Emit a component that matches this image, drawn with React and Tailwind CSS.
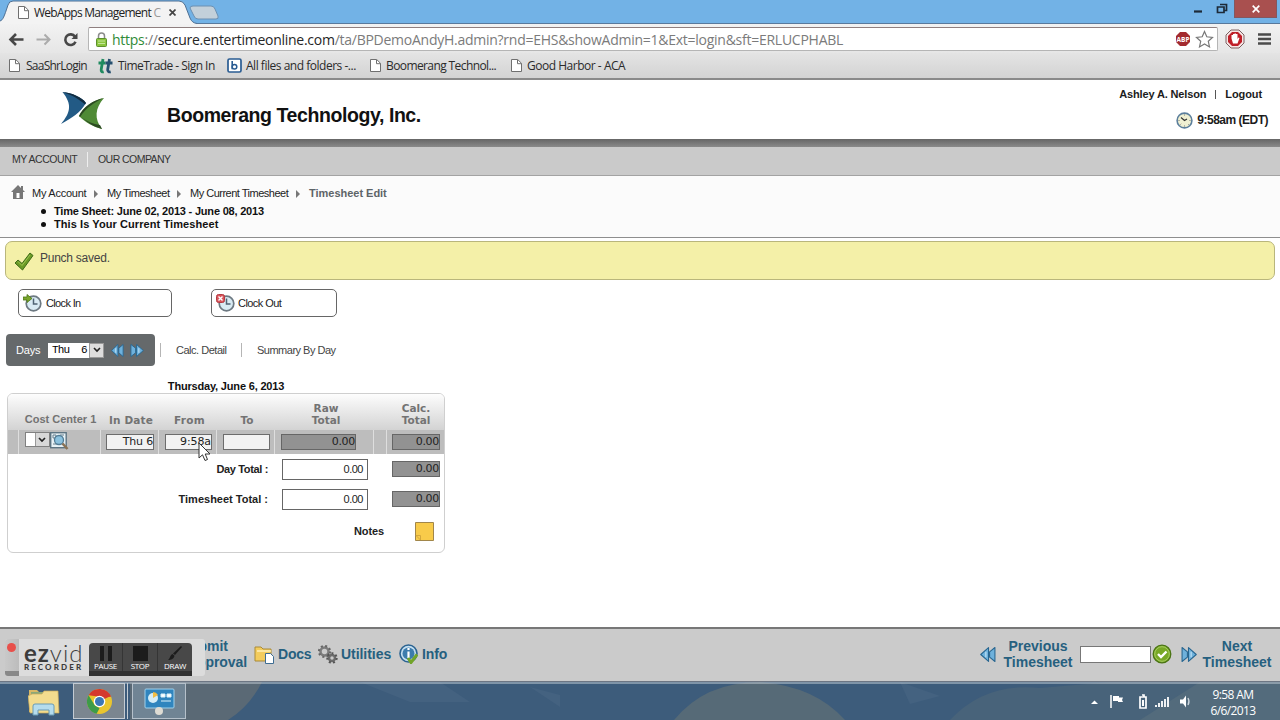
const bookmarks = [
  { label: 'SaaShrLogin', icon: 'page', className: 'w-[89px] gap-[6px] tracking-[-0.75px]' },
  { label: 'TimeTrade - Sign In', icon: 'tt', className: 'w-[129px] gap-[5px] tracking-[-0.55px]' },
  { label: 'All files and folders -...', icon: 'b', className: 'w-[143px] gap-[4px] tracking-[-0.48px]' },
  { label: 'Boomerang Technol...', icon: 'page', className: 'w-[141px] gap-[5px] tracking-[-0.6px]' },
  { label: 'Good Harbor - ACA', icon: 'page', className: 'w-[130px] gap-[5px] tracking-[-0.48px]' },
];

const crumbs = [
  { label: 'My Account', className: 'w-[75px] tracking-[-0.25px]' },
  { label: 'My Timesheet', className: 'w-[83px] tracking-[-0.5px]' },
  { label: 'My Current Timesheet', className: 'w-[119px] tracking-[-0.5px]' },
];

function PageIcon() {
  return (
    <svg className="h-[13px] w-[11px] shrink-0" viewBox="0 0 11 13">
      <path d="M.5.5h6.200l3.800 3.800v8.200H.5z" fill="#fff" stroke="#6f6f6f" />
      <path d="M6.500.8v3.900h3.800" fill="none" stroke="#6f6f6f" />
    </svg>
  );
}

function BookmarkIcon({ type }) {
  if (type === 'tt') {
    return (
      <svg className="h-4 w-[15px] shrink-0" viewBox="0 0 15 16">
        <path d="M5 1 3.200 11.500c-.3 2 1 2.700 2.500 2.300M.5 5h7" fill="none" stroke="#1f8a5f" strokeWidth="2.800" />
        <path d="M11.500 1 9.700 11.500c-.3 2 1.300 2.700 3 2.300M7.500 5h7" fill="none" stroke="#27506f" strokeWidth="2.800" />
      </svg>
    );
  }
  if (type === 'b') {
    return (
      <svg className="h-[15px] w-[15px] shrink-0" viewBox="0 0 15 15">
        <rect x="1" y="1" width="13" height="13" rx="1.500" fill="#fff" stroke="#2a5c92" strokeWidth="1.700" />
        <path d="M5.200 3v8.200" stroke="#2a5c92" strokeWidth="1.600" />
        <circle cx="7.500" cy="8.800" r="2.300" fill="none" stroke="#2a5c92" strokeWidth="1.500" />
      </svg>
    );
  }
  return <PageIcon />;
}

function TitleBar() {
  return (
    <div className="flex h-[24px] justify-between border-b border-[#58799c] bg-[#72b2e6]">
      <div className="relative h-[24px] w-[220px]">
        <svg className="absolute inset-0 h-[24px] w-[220px]" viewBox="0 0 220 24">
          <path d="M0 24V21C3 20 4 17 8 5Q9 1 13 1H179Q183 1 185 5L190 18Q192 23 197 23.500V24Z" fill="#f3f3f3" />
          <path d="M0 21C3 20 4 17 8 5Q9 1 13 1H179Q183 1 185 5L190 18Q192 23 197 23.500" fill="none" stroke="#4d6f93" />
          <path d="M193 6H211Q214 6 215 9L218 16Q219 19 216 19H198Q195 19 194 16L190 8Q190 6 193 6Z" fill="#c3d0da" stroke="#6c90b2" />
        </svg>
        <div className="relative flex h-[25px] items-center pl-[18px]">
          <PageIcon />
          <span className="ml-[5px] w-[128px] whitespace-nowrap text-[12px] tracking-[-0.75px] text-[#222]">
            WebApps Management <span className="text-[#999]">C</span>
          </span>
          <svg className="ml-[7px] h-[7px] w-[7px]" viewBox="0 0 7 7">
            <path d="m.5.5 6 6m0-6-6 6" stroke="#444" strokeWidth="1.700" />
          </svg>
        </div>
      </div>
      <div className="flex">
        <svg className="h-[22px] w-[41px]" viewBox="0 0 41 22">
          <path d="M1 11.500h8" stroke="#1d2a38" strokeWidth="2.200" />
          <path d="M27 4.500h6.500v6h-2M24.500 7h6.500v5.500h-6.500z" fill="none" stroke="#1d2a38" strokeWidth="1.700" />
        </svg>
        <div className="flex h-[18px] w-[43px] items-center justify-center border border-t-0 border-[#84575f] bg-[#a9504f]">
          <svg className="h-[8px] w-[8px]" viewBox="0 0 8 8">
            <path d="m.7.700 6.600 6.600m0-6.600L.7 7.300" stroke="#fff" strokeWidth="1.700" />
          </svg>
        </div>
        <div className="w-[3px]" />
      </div>
    </div>
  );
}

function AddressBar() {
  return (
    <div className="flex h-[29px] items-center bg-linear-to-b from-[#f2f2f2] to-[#e6e6e6] pl-[8px]">
      <svg className="h-[16px] w-[72px] shrink-0" viewBox="0 0 72 16">
        <path d="M15.500 8.500H3M8 3 2.500 8.500 8 14" fill="none" stroke="#474747" strokeWidth="2.600" />
        <path d="M28.500 8.500H41M36.500 3.500l5 5-5 5" fill="none" stroke="#ababab" strokeWidth="2" />
        <path d="M67.500 10.700a5.300 5.300 0 1 1-.5-5" fill="none" stroke="#474747" strokeWidth="2.600" />
        <path d="M69.500 2v6h-6z" fill="#474747" />
      </svg>
      <div className="ml-[8px] flex h-[24px] w-[1130px] items-center rounded-[2px] border border-[#b5b5b5] border-t-[#8f7f7f] bg-white pt-px pl-[7px]">
        <svg className="h-[15px] w-[11px] shrink-0" viewBox="0 0 11 15">
          <path d="M2.500 7V4a3 3 0 0 1 6 0v3" fill="none" stroke="#8b8b8b" strokeWidth="1.500" />
          <rect x=".5" y="6.500" width="10" height="8" rx="1" fill="#8cc63f" stroke="#5c8f2c" />
          <path d="M2 9h7M2 11.500h7" stroke="#c4e59a" />
        </svg>
        <span className="ml-[5px] w-[1060px] whitespace-nowrap text-[14px] tracking-[-0.26px] text-[#7b7b7b]">
          <span className="text-[#2f8b37]">https</span>://<span className="text-[#262626]">secure.entertimeonline.com</span>
          /ta/BPDemoAndyH.admin?rnd=EHS&amp;showAdmin=1&amp;Ext=login&amp;sft=ERLUCPHABL
        </span>
        <svg className="ml-[3px] h-[18px] w-[40px] shrink-0" viewBox="0 0 40 18">
          <path d="M5 2h6l4 4v6l-4 4H5l-4-4V6z" fill="#a32b2f" />
          <text x="8" y="11.500" textAnchor="middle" fontSize="6.500" fontWeight="bold" fill="#fff">ABP</text>
          <path d="m29.500 1.500 2.300 5.300 5.700.6-4.200 3.900 1.200 5.600-5-2.900-5 2.900 1.200-5.600-4.200-3.900 5.700-.6z" fill="#fff" stroke="#777" strokeWidth="1.200" />
        </svg>
      </div>
      <svg className="ml-[7px] h-[20px] w-[20px] shrink-0" viewBox="0 0 20 20">
        <path d="M6 1h8l5 5v8l-5 5H6l-5-5V6z" fill="#f6e4e4" stroke="#7c6262" />
        <path d="M7 3h6l4 4v6l-4 4H7l-4-4V7z" fill="#bf1f28" />
        <path d="M6.500 9.500V6h1.500V5h1.500v-.5H11V5h1.500v5l1-1.500 1 .5-2 5.500H8z" fill="#fff" />
      </svg>
      <svg className="ml-[13px] h-[13px] w-[13px] shrink-0" viewBox="0 0 13 13">
        <path d="M0 2.500h13M0 7h13M0 11.500h13" stroke="#4b4b4b" strokeWidth="2.600" />
      </svg>
    </div>
  );
}

function BookmarksBar() {
  return (
    <div className="flex h-[27px] items-center border-b-2 border-[#8a8a8a] bg-linear-to-b from-[#e4e4e4] to-[#d3d3d3] pl-[9px]">
      {bookmarks.map((item) => (
        <div key={item.label} className={'flex shrink-0 items-center whitespace-nowrap text-[12px] text-[#2b2b2b] ' + item.className}>
          <BookmarkIcon type={item.icon} />
          <span>{item.label}</span>
        </div>
      ))}
    </div>
  );
}

function Header() {
  return (
    <div className="flex h-[59px] justify-between bg-white">
      <div className="flex items-start">
        <svg className="mt-[11px] ml-[60px] h-[39px] w-[45px]" viewBox="0 0 45 39">
          <path d="M2.500 1C12 2 22 6 26 12 20 22 12 27 1 33 11 21 12 13 2.500 1Z" fill="#225a85" />
          <path d="M2.500 1C12 2 22 6 26 12l-1 1.500C19 8 12 4 2.500 1Z" fill="#122c40" />
          <path d="M44 7C33 9 23 16 19 25c6 6 14 11 23 13C34 28 35 17 44 7Z" fill="#4f8a35" />
          <path d="M44 7C33 9 23 16 19 25l1 1C26 17 34 11 44 7ZM21 26c6 5 13 10 21 12l-2-4C33 33 26 30 21 26Z" fill="#2c4a22" />
        </svg>
        <h1 className="mt-[22px] ml-[62px] whitespace-nowrap text-[19.500px] leading-[26px] font-bold tracking-[-0.42px] text-[#111]">
          Boomerang Technology, Inc.
        </h1>
      </div>
      <div className="flex flex-col items-end pr-[12px] text-[#1c1c1c]">
        <div className="mt-[7px] flex h-[14px] items-center pr-[6px] text-[11px] leading-[14px] font-bold">
          <span className="tracking-[-0.15px]">Ashley A. Nelson</span>
          <span className="mx-[9px] h-[9px] w-px bg-[#555]" />
          <span className="tracking-[-0.1px]">Logout</span>
        </div>
        <div className="mt-[11px] flex items-center gap-[4px] text-[12px] leading-[17px] font-bold tracking-[-0.5px]">
          <svg className="h-[17px] w-[17px]" viewBox="0 0 17 17">
            <circle cx="8.500" cy="8.500" r="7.400" fill="#f0f0d2" stroke="#5c7f9c" strokeWidth="1.600" />
            <path d="M5 5.500 8.500 8.500l2.500-1.500" fill="none" stroke="#333" strokeWidth="1.200" />
            <path d="M8.500 2.500v1M8.500 13.500v1M2.500 8.500h1M13.500 8.500h1M4.500 12.500l.7-.7M12 12l.6.600" stroke="#777" />
          </svg>
          9:58am (EDT)
        </div>
      </div>
    </div>
  );
}

function NavBar() {
  return (
    <>
      <div className="h-[8px] bg-linear-to-b from-[#666] to-[#8a8a8a]" />
      <div className="flex h-[29px] items-center border-b border-[#a3a3a3] bg-[#cacaca] pb-[3px] pl-[12px] text-[10.500px] text-[#333]">
        <span className="w-[75px] whitespace-nowrap tracking-[-0.45px]">MY ACCOUNT</span>
        <span className="h-[15px] w-px bg-[#eee]" />
        <span className="ml-[10px] whitespace-nowrap tracking-[-0.55px]">OUR COMPANY</span>
      </div>
    </>
  );
}

function Breadcrumbs() {
  return (
    <div className="h-[62px] border-b border-[#8e8e8e] bg-[#fbfbfb] pt-[8px]">
      <div className="flex h-[19px] items-center pl-[11px] text-[11px] text-[#222]">
        <svg className="mr-[7px] h-[14px] w-[14px] -translate-y-[2px]" viewBox="0 0 14 14">
          <path d="M7 0 0 7h2v7h10V7h2l-2-2V1h-2v2z" fill="#777" />
          <path d="M5.500 8h3v5h-3z" fill="#fff" />
        </svg>
        {crumbs.map((crumb) => (
          <div key={crumb.label} className={'flex shrink-0 items-center justify-between pr-[9px] whitespace-nowrap ' + crumb.className}>
            <span>{crumb.label}</span>
            <svg className="h-[8px] w-[4px] shrink-0" viewBox="0 0 4 8">
              <path d="M0 0 4 4 0 8z" fill="#777" />
            </svg>
          </div>
        ))}
        <span className="font-bold tracking-[-0.02px] text-[#5d6468]">Timesheet Edit</span>
      </div>
      <ul className="pt-[2px] pl-[41px] text-[11px] leading-[13px] font-bold text-[#111]">
        <li className="flex items-center gap-[8px] whitespace-nowrap">
          <span className="h-[5px] w-[5px] rounded-full bg-[#111]" />
          <span className="tracking-[-0.2px]">Time Sheet: June 02, 2013 - June 08, 2013</span>
        </li>
        <li className="flex items-center gap-[8px] whitespace-nowrap">
          <span className="h-[5px] w-[5px] rounded-full bg-[#111]" />
          <span className="tracking-[0.08px]">This Is Your Current Timesheet</span>
        </li>
      </ul>
    </div>
  );
}

function ClockIcon({ out }) {
  return (
    <svg className="h-[18px] w-[19px] shrink-0" viewBox="0 0 19 18">
      <circle cx="10.500" cy="9.500" r="7.300" fill="#d9ebf3" stroke="#6d7982" strokeWidth="1.700" />
      <path d="M10.500 4.500v5.500h4" fill="none" stroke="#4f6373" strokeWidth="1.500" />
      {out ? (
        <>
          <rect x=".5" y=".5" width="8" height="8" rx="2" fill="#d9545b" stroke="#b33b42" />
          <path d="m2.500 2.500 4 4m0-4-4 4" stroke="#fff" strokeWidth="1.400" />
        </>
      ) : (
        <path d="M0 3h4V.5L9 4.500 4 8.500V6H0z" fill="#7aa62c" stroke="#4d7519" strokeWidth=".8" />
      )}
    </svg>
  );
}

function SkipIcon({ back, className }) {
  return (
    <svg className={className} viewBox="0 0 15 14" preserveAspectRatio="none">
      <g transform={back ? 'matrix(-1 0 0 1 15 0)' : undefined} fill="#6eb1dc" stroke="#286690" strokeLinejoin="round">
        <path d="M1 .5v13l5-4v-5z" />
        <path d="M7 .5 14.300 7 7 13.500z" />
        <path d="M9.500 4.500v5" stroke="#c9e6f7" />
      </g>
    </svg>
  );
}

function DayToolbar() {
  return (
    <div className="mt-[17px] flex h-[32px] items-center pl-[6px] text-[11px]">
      <div className="flex h-[32px] w-[149px] shrink-0 items-center rounded-[4px] bg-[#65696b] pl-[10px]">
        <span className="w-[32px] tracking-[-0.2px] text-white">Days</span>
        <div className="flex h-[15px] w-[56px] shrink-0 items-center bg-white">
          <span className="w-[41px] shrink-0 pl-[4px] font-['Liberation_Mono',monospace] text-[11px] leading-[15px] tracking-[-0.8px] whitespace-pre text-black">Thu  6</span>
          <span className="flex h-[15px] w-[15px] shrink-0 items-center justify-center border border-[#999] bg-[#ddd]">
            <svg className="h-[6px] w-[8px]" viewBox="0 0 8 6">
              <path d="m1 1 3 3 3-3" fill="none" stroke="#222" strokeWidth="1.600" />
            </svg>
          </span>
        </div>
        <SkipIcon back className="ml-[7px] h-[13px] w-[13px] shrink-0" />
        <SkipIcon className="ml-[6px] h-[13px] w-[14px] shrink-0" />
      </div>
      <span className="ml-[5px] h-[14px] w-px bg-[#b5b5b5]" />
      <span className="ml-[15px] w-[65px] whitespace-nowrap tracking-[-0.48px] text-[#444]">Calc. Detail</span>
      <span className="h-[14px] w-px bg-[#b5b5b5]" />
      <span className="ml-[15px] whitespace-nowrap tracking-[-0.5px] text-[#444]">Summary By Day</span>
    </div>
  );
}

function Field({ className, children }) {
  return (
    <div className={'flex items-center justify-end border text-[11px] whitespace-nowrap text-[#222] ' + className}>
      {children}
    </div>
  );
}

const cols = 'grid grid-cols-[11px_82px_58px_58px_58px_99px_13px_57px]';

function TotalRow({ label, className }) {
  return (
    <div className={'flex items-start ' + className}>
      <span className="w-[260px] text-right text-[11px] leading-[21px] font-bold whitespace-nowrap text-[#222]">{label}</span>
      <Field className="ml-[14px] h-[21px] w-[86px] border-[#666] bg-white pr-[4px] tracking-[-0.5px]">0.00</Field>
      <Field className="mt-[2px] ml-[24px] h-[16px] w-[48px] border-[#666] bg-[#929292] font-['DejaVu_Sans'] tracking-[-0.3px]">0.00</Field>
    </div>
  );
}

function TimesheetTable() {
  return (
    <div className="ml-[7px] h-[160px] w-[438px] overflow-hidden rounded-[6px] border border-[#cfcfcf] bg-white">
      <div className={cols + " h-[36px] items-end bg-linear-to-b from-[#fdfdfd] to-[#d3d3d3] pb-[4px] text-center font-['DejaVu_Sans'] text-[10.500px] leading-[12px] font-bold text-[#737373]"}>
        <span />
        <span className="pb-px pl-px font-['Liberation_Sans'] text-[11px] whitespace-nowrap">Cost Center 1</span>
        <span className="pl-[2px] whitespace-nowrap tracking-[0.15px]">In Date</span>
        <span className="pl-[3px] tracking-[0.3px]">From</span>
        <span className="pl-[2px]">To</span>
        <span className="pl-[3px]">Raw<br />Total</span>
        <span />
        <span className="pl-px">Calc.<br />Total</span>
      </div>
      <div className={cols + ' h-[24px] bg-[#bdbdbd]'}>
        <div className="border-r border-[#dedede]" />
        <div className="flex border-r border-[#dedede] pt-[2px] pl-[6px]">
          <div className="flex h-[15px] w-[25px] border border-[#808080] bg-white">
            <div className="w-[9px]" />
            <div className="flex w-[15px] items-center justify-center border-l border-[#999] bg-[#d8d8d8]">
              <svg className="h-[6px] w-[8px]" viewBox="0 0 8 6">
                <path d="m1 1 3 3 3-3" fill="none" stroke="#222" strokeWidth="1.700" />
              </svg>
            </div>
          </div>
          <svg className="h-[18px] w-[20px]" viewBox="0 0 20 18">
            <rect x=".7" y=".7" width="15.500" height="15" fill="#e8f2f6" stroke="#5d7482" strokeWidth="1.400" />
            <path d="M3 3h3v3H3zM10 3h4M3 12h4" stroke="#667e8c" fill="none" />
            <circle cx="9" cy="8" r="4.500" fill="#8bc2df" stroke="#517c96" strokeWidth="1.300" />
            <path d="m12.500 11.500 5 5.500" stroke="#8b7355" strokeWidth="2.600" />
          </svg>
        </div>
        <div className="border-r border-[#dedede] pt-[4px] pl-[5px]">
          <Field className="h-[16px] w-[48px] border-[#6c6c6c] bg-[#f2f2f2] pt-px font-['DejaVu_Sans'] tracking-[-0.2px]">Thu 6</Field>
        </div>
        <div className="border-r border-[#dedede] pt-[4px] pl-[6px]">
          <Field className="h-[16px] w-[47px] border-[#6c6c6c] bg-[#f2f2f2] pt-px font-['DejaVu_Sans'] tracking-[-0.1px]">9:58a</Field>
        </div>
        <div className="border-r border-[#dedede] pt-[4px] pl-[6px]">
          <Field className="h-[16px] w-[47px] border-[#6c6c6c] bg-[#f2f2f2]" />
        </div>
        <div className="border-r border-[#dedede] pt-[4px] pl-[6px]">
          <Field className="h-[16px] w-[75px] border-[#666] bg-[#929292] pt-px font-['DejaVu_Sans'] tracking-[-0.3px]">0.00</Field>
        </div>
        <div className="border-r border-[#dedede]" />
        <div className="pt-[4px] pl-[5px]">
          <Field className="h-[16px] w-[48px] border-[#666] bg-[#929292] pt-px font-['DejaVu_Sans'] tracking-[-0.3px]">0.00</Field>
        </div>
      </div>
      <TotalRow label="Day Total :" className="h-[30px] pt-[5px] tracking-[-0.35px]" />
      <TotalRow label="Timesheet Total :" className="h-[35px] pt-[5px]" />
      <div className="flex items-center pl-[346px] pt-[3px] text-[11px] font-bold text-[#222]">
        <span className="w-[61px] tracking-[-0.1px]">Notes</span>
        <svg className="h-[19px] w-[19px]" viewBox="0 0 19 19">
          <path d="M.5.500h18v18H.5z" fill="#f8cb4a" stroke="#a1864a" />
          <path d="M1 13.500h4.500V18M5.500 18 1 13.500" fill="none" stroke="#d3a73c" />
        </svg>
      </div>
    </div>
  );
}

function Recorder() {
  return (
    <div className="absolute top-[10px] left-[5px] flex h-[37px] w-[200px] items-end rounded-[3px] bg-[#dcdcdc] text-white">
      <div className="flex h-[37px] w-[14px] flex-col justify-between rounded-l-[3px] bg-linear-to-r from-[#c9c9c9] to-[#bcbcbc] pt-[4px]">
        <span className="ml-[2px] h-[9px] w-[9px] rounded-full bg-[#e8504b]" />
        <span className="h-[5px] rounded-bl-[3px] bg-[#888]" />
      </div>
      <div className="h-[37px] w-[70px] pt-[5px] pl-[5px] font-['Lato'] whitespace-nowrap text-[#3c3c3c]">
        <div className="h-[19px] text-[24px] leading-[17px] tracking-[1px]"><span className="font-bold">ez</span><span className="font-light">vid</span></div>
        <div className="text-[8px] leading-[9px] font-black tracking-[2.100px]">RECORDER</div>
      </div>
      <div className="flex h-[33px] w-[103px] rounded-t-[4px] border-b-[5px] border-[#303030] bg-[#484848] font-['Open_Sans'] text-[8px] leading-[9px] font-normal">
        <div className="flex w-[34px] flex-col items-center border-r border-[#353535] pt-[3px]">
          <svg className="h-[15px] w-[14px]" viewBox="0 0 14 15"><path d="M1 0h4v15H1zM9 0h4v15H9z" fill="#1c1c1c" /></svg>
          <span className="tracking-[-0.3px]">PAUSE</span>
        </div>
        <div className="flex w-[35px] flex-col items-center border-r border-[#353535] pt-[3px]">
          <svg className="h-[15px] w-[15px]" viewBox="0 0 15 15"><path d="M0 0h15v15H0z" fill="#1c1c1c" /></svg>
          <span className="tracking-[-0.3px]">STOP</span>
        </div>
        <div className="flex w-[34px] flex-col items-center pt-[3px]">
          <svg className="h-[15px] w-[14px]" viewBox="0 0 14 15"><path d="M13 0 14 1 7 9 5 7.500zM4.500 8l2 1.800C6 13 3 14 0 14c2-1 2-5 4.500-6z" fill="#1c1c1c" /></svg>
          <span className="tracking-[-0.3px]">DRAW</span>
        </div>
      </div>
    </div>
  );
}

function Footer() {
  return (
    <div className="relative flex h-[54px] items-center justify-between border-t-2 border-[#777] bg-[#cbcbcb] pb-[2px] text-[14px] leading-[16px] font-bold text-[#26607f]">
      <div className="flex items-center">
        <div className="w-[247px] pl-[178px]">
          <div className="w-[50px] text-right">Submit</div>
          <div className="w-[69px] text-right tracking-[-0.1px]">Approval</div>
        </div>
        <svg className="ml-[7px] h-[19px] w-[20px]" viewBox="0 0 20 19">
          <path d="M1 16V2h6l2 2h8v12z" fill="#f3cc5d" stroke="#a98a38" />
          <path d="M3 6h14" stroke="#fff0b8" strokeWidth="1.500" />
          <path d="M11.500 8.500h5l3 3v7h-8z" fill="#fff" stroke="#3f6d92" />
        </svg>
        <span className="ml-[4px] w-[40px] tracking-[-0.2px]">Docs</span>
        <svg className="h-[19px] w-[20px]" viewBox="0 0 20 19">
          <circle cx="6.500" cy="6.500" r="4" fill="none" stroke="#7c7c7c" strokeWidth="2.500" />
          <circle cx="6.500" cy="6.500" r="5.600" fill="none" stroke="#666" strokeWidth="2" strokeDasharray="2 2.400" />
          <circle cx="14" cy="13" r="3" fill="none" stroke="#6c6c6c" strokeWidth="2.500" />
          <circle cx="14" cy="13" r="4.700" fill="none" stroke="#555" strokeWidth="2" strokeDasharray="2 2.200" />
        </svg>
        <span className="ml-[3px] w-[58px] tracking-[-0.05px]">Utilities</span>
        <svg className="h-[20px] w-[20px]" viewBox="0 0 20 20">
          <circle cx="9.500" cy="9.500" r="8.500" fill="#c5dff0" stroke="#2b6391" strokeWidth="1.600" />
          <circle cx="9.500" cy="9.500" r="6" fill="#3d7cad" />
          <path d="M9.500 4v2M9.500 7.500V14" stroke="#fff" strokeWidth="2.200" />
          <path d="m9 14 3 4.500 6-8" fill="none" stroke="#72a429" strokeWidth="3" />
        </svg>
        <span className="ml-[3px] tracking-[-0.1px]">Info</span>
      </div>
      <div className="flex items-center pr-[8px] text-center">
        <SkipIcon back className="h-[15px] w-[16px]" />
        <div className="ml-[7px] w-[70px]">Previous<br />Timesheet</div>
        <div className="ml-[7px] h-[17px] w-[71px] border border-[#777] bg-white" />
        <svg className="ml-px h-[20px] w-[20px]" viewBox="0 0 20 20">
          <circle cx="10" cy="10" r="8.800" fill="#78a827" stroke="#4a7413" strokeWidth="1.300" />
          <circle cx="10" cy="10" r="7.300" fill="none" stroke="#a8cd62" />
          <path d="m6 10 3 3 5.500-5.500" fill="none" stroke="#fff" strokeWidth="2.400" />
        </svg>
        <SkipIcon className="ml-[9px] h-[15px] w-[16px]" />
        <div className="ml-[5px] w-[70px]">Next<br />Timesheet</div>
      </div>
      <Recorder />
    </div>
  );
}

function Taskbar() {
  return (
    <div className="relative h-[39px] overflow-hidden border-t border-[#6d7683] bg-[#3d5c7b] font-['Open_Sans'] text-white">
      {/* wallpaper showing through the glass */}
      <svg className="absolute inset-0 h-[38px] w-[1280px]" viewBox="0 0 1280 38">
        <path d="M130 0H262Q250 24 228 38H130Z" fill="#5a6975" />
        <path d="M360 0h80l30 20h-60zM900 0l40 14-30 8zM530 5l30 8v12z" fill="#446280" />
        <path d="M674 38Q705 0 760 0Q815 4 845 38Z" fill="#566a77" />
        <path d="M950 38Q985 0 1040 6L1110 0H1280V38Z" fill="#48637a" />
        <path d="M1140 38 1200 0h80v38z" fill="#536b7c" />
        <path d="M0 1h1280" stroke="#c3cdd6" />
      </svg>
      <div className="relative flex h-[38px] items-center justify-between">
        <div className="flex items-center">
          <svg className="mr-[13px] ml-[28px] h-[29px] w-[32px]" viewBox="0 0 32 29">
            <path d="M1 3h8l2 2h18v20H1z" fill="#d9b866" />
            <path d="M3 5h25v4H3z" fill="#8ba878" />
            <path d="M0 9 4 7h10l2-3h14l1 22H2z" fill="#f3dc8e" stroke="#c9a95c" strokeWidth=".7" />
            <path d="M5 28V19q0-2 2-2h17q2 0 2 2v9h-5v-5H10v5z" fill="#b5dced" stroke="#689bb6" />
          </svg>
          <div className="flex h-[36px] w-[52px] items-center justify-center border border-[#c3cbd3] bg-[#7b8690] pl-px">
            <svg className="h-[27px] w-[27px]" viewBox="0 0 28 28">
              <circle cx="14" cy="14" r="13" fill="#e9c52f" />
              <path d="M2.700 7.500A13 13 0 0 1 26 9H14z" fill="#d4382e" />
              <path d="M2.700 7.500 9 18l5 3-3 5.700A13 13 0 0 1 2.700 7.500Z" fill="#3d9b49" />
              <path d="M14 8H26L14 14z" fill="#d4382e" />
              <circle cx="14" cy="14" r="6" fill="#fff" />
              <circle cx="14" cy="14" r="4.700" fill="#3b77b7" />
            </svg>
          </div>
          <div className="h-[36px] w-[3px] border-r border-[#c3cbd3]" />
          <div className="ml-[4px] flex h-[36px] w-[54px] items-center justify-center border border-[#b5c0ca] bg-[#708494]">
            <svg className="h-[27px] w-[31px]" viewBox="0 0 31 27">
              <rect x="1" y="1" width="29" height="19" rx="1" fill="#3085be" stroke="#a0d1eb" />
              <circle cx="9" cy="10" r="5" fill="#d4edf7" />
              <path d="M9 10V4a6 6 0 0 1 5 3z" fill="#f2bd42" />
              <path d="M17 6h4v3h-4zM23 6h4v3h-4zM17 13h10" fill="#fff" stroke="#dcf2fa" />
              <circle cx="15" cy="23" r="4" fill="#dedbd3" />
            </svg>
          </div>
        </div>
        <div className="flex items-center">
          <svg className="h-[18px] w-[104px]" viewBox="0 0 104 18">
            <path d="M1 12 4.500 8.500 8 12z" fill="#fff" />
            <path d="M21 3v13" stroke="#fff" strokeWidth="1.500" />
            <path d="M23 4h6v1.500h4l-1 2.500 1 2h-5V9h-5z" fill="#fff" />
            <path d="M50 5h6v11h-6zM52 3h2v2" fill="none" stroke="#fff" strokeWidth="1.700" />
            <path d="M53 8v6" stroke="#fff" strokeWidth="2" />
            <path d="M66 15v-2M69 15v-4M72 15V9M75 15V7M78 15V5" stroke="#fff" strokeWidth="1.800" />
            <path d="M90 7.500h3l3-4v12l-3-4h-3z" fill="#fff" />
            <path d="M98 6q2 3.500 0 7" fill="none" stroke="#ccd6de" strokeWidth="1.300" />
          </svg>
          <div className="mt-[3px] mr-[20px] ml-[12px] w-[54px] text-center text-[12px] leading-[16px] whitespace-nowrap">
            <div className="tracking-[-0.6px]">9:58 AM</div>
            <div className="tracking-[-0.6px]">6/6/2013</div>
          </div>
        </div>
      </div>
    </div>
  );
}

export default function App() {
  return (
    <div className="relative flex h-[720px] w-[1280px] flex-col overflow-hidden bg-white font-['Liberation_Sans',sans-serif]">
      <div className="font-['Open_Sans',sans-serif]">
        <TitleBar />
        <AddressBar />
        <BookmarksBar />
      </div>
      <Header />
      <NavBar />
      <Breadcrumbs />
      <main className="flex-1">
        <div className="mx-[5px] mt-[3px] flex h-[39px] rounded-[7px] border border-[#b9b67c] bg-[#f4f0a8] pt-[9px] pl-[8px]">
          <svg className="mt-px h-[19px] w-[20px]" viewBox="0 0 20 19">
            <path d="m1 11 3-3 4 3.500L16 1l3 2.500L8.500 18z" fill="#6b9a26" stroke="#3e6b17" />
            <path d="m4 9.500 4 4L16 3" fill="none" stroke="#9dc553" />
          </svg>
          <span className="ml-[6px] text-[12px] leading-[14px] tracking-[-0.25px] text-[#444]">Punch saved.</span>
        </div>
        <div className="mt-[9px] flex gap-[39px] pl-[18px] text-[11px] text-[#222]">
          <button className="flex h-[28px] w-[154px] items-center gap-[4px] rounded-[5px] border border-[#666] bg-white pl-[4px] tracking-[-0.65px]">
            <ClockIcon />
            Clock In
          </button>
          <button className="flex h-[28px] w-[126px] items-center gap-[3px] rounded-[5px] border border-[#666] bg-white pl-[4px] tracking-[-0.55px]">
            <ClockIcon out />
            Clock Out
          </button>
        </div>
        <DayToolbar />
        <h2 className="mt-[13px] w-[452px] text-center text-[11px] leading-[14px] font-bold tracking-[-0.18px] text-[#111]">
          Thursday, June 6, 2013
        </h2>
        <TimesheetTable />
      </main>
      <Footer />
      <Taskbar />
      <svg className="absolute top-[442px] left-[198px] h-[20px] w-[13px]" viewBox="0 0 13 20">
        <path d="M1 1v15l3.500-3.200L7 18.500l2.500-1L7.200 12H12z" fill="#fff" stroke="#333" />
      </svg>
    </div>
  );
}
